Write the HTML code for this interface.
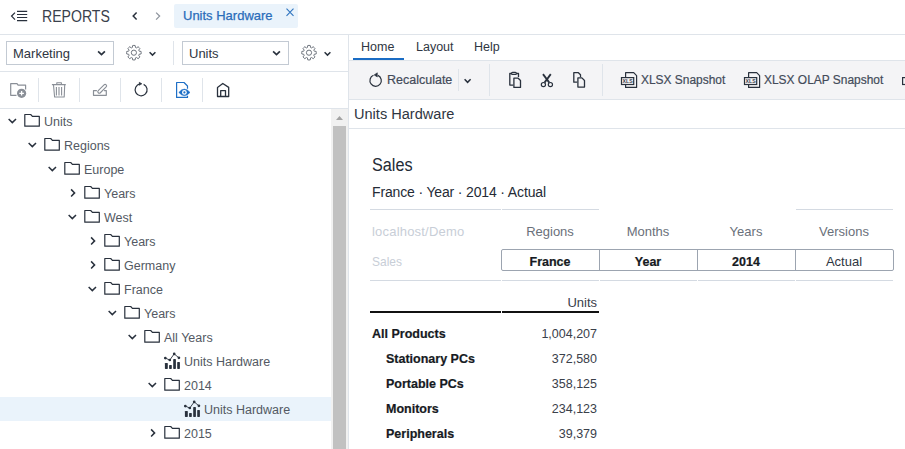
<!DOCTYPE html>
<html><head><meta charset="utf-8"><style>
html,body{margin:0;padding:0;background:#fff;}
#root{position:relative;width:905px;height:449px;overflow:hidden;background:#fff;font-family:"Liberation Sans",sans-serif;}
.t{position:absolute;white-space:nowrap;line-height:1;}
.r{position:absolute;}
#ic{position:absolute;left:0;top:0;}
</style></head><body><div id="root">
<div class="t" style="left:42px;top:9px;font-size:16px;color:#3a414c;transform:scaleX(0.88);transform-origin:left top;">REPORTS</div>
<div class="r" style="left:174px;top:4px;width:124px;height:24px;background:#eaf3fb;border-radius:2px;"></div>
<div class="t" style="left:183px;top:9px;font-size:13px;color:#2a6dba;-webkit-text-stroke:0.25px #2a6dba;">Units Hardware</div>
<div class="r" style="left:0px;top:34px;width:905px;height:1px;background:#dfe4ea;"></div>
<div class="r" style="left:348px;top:35px;width:1px;height:414px;background:#dfe4ea;"></div>
<div class="r" style="left:6px;top:41px;width:108px;height:24px;background:#fff;border:1px solid #c3cad3;box-sizing:border-box;"></div>
<div class="t" style="left:13px;top:47px;font-size:13px;color:#2f3642;">Marketing</div>
<div class="r" style="left:173px;top:41px;width:1px;height:24px;background:#dfe4ea;"></div>
<div class="r" style="left:182px;top:41px;width:107px;height:24px;background:#fff;border:1px solid #c3cad3;box-sizing:border-box;"></div>
<div class="t" style="left:189px;top:47px;font-size:13px;color:#2f3642;">Units</div>
<div class="r" style="left:0px;top:71px;width:348px;height:1px;background:#dfe4ea;"></div>
<div class="r" style="left:38px;top:78px;width:1px;height:24px;background:#dfe4ea;"></div>
<div class="r" style="left:79px;top:78px;width:1px;height:24px;background:#dfe4ea;"></div>
<div class="r" style="left:120px;top:78px;width:1px;height:24px;background:#dfe4ea;"></div>
<div class="r" style="left:161px;top:78px;width:1px;height:24px;background:#dfe4ea;"></div>
<div class="r" style="left:202px;top:78px;width:1px;height:24px;background:#dfe4ea;"></div>
<div class="r" style="left:0px;top:108px;width:348px;height:1px;background:#dfe4ea;"></div>
<div class="r" style="left:0px;top:397px;width:331px;height:24px;background:#eaf3fb;"></div>
<div class="t" style="left:44px;top:116px;font-size:12.5px;color:#535963;">Units</div>
<div class="t" style="left:64px;top:140px;font-size:12.5px;color:#535963;">Regions</div>
<div class="t" style="left:84px;top:164px;font-size:12.5px;color:#535963;">Europe</div>
<div class="t" style="left:104px;top:188px;font-size:12.5px;color:#535963;">Years</div>
<div class="t" style="left:104px;top:212px;font-size:12.5px;color:#535963;">West</div>
<div class="t" style="left:124px;top:236px;font-size:12.5px;color:#535963;">Years</div>
<div class="t" style="left:124px;top:260px;font-size:12.5px;color:#535963;">Germany</div>
<div class="t" style="left:124px;top:284px;font-size:12.5px;color:#535963;">France</div>
<div class="t" style="left:144px;top:308px;font-size:12.5px;color:#535963;">Years</div>
<div class="t" style="left:164px;top:332px;font-size:12.5px;color:#535963;">All Years</div>
<div class="t" style="left:184px;top:356px;font-size:12.5px;color:#535963;">Units Hardware</div>
<div class="t" style="left:184px;top:380px;font-size:12.5px;color:#535963;">2014</div>
<div class="t" style="left:204px;top:404px;font-size:12.5px;color:#535963;">Units Hardware</div>
<div class="t" style="left:184px;top:428px;font-size:12.5px;color:#535963;">2015</div>
<div class="r" style="left:331px;top:109px;width:17px;height:340px;background:#f1f1f1;"></div>
<div class="r" style="left:333px;top:126px;width:13px;height:323px;background:#c1c1c1;"></div>
<div class="t" style="left:361px;top:41px;font-size:12.5px;color:#2f3642;">Home</div>
<div class="t" style="left:416px;top:41px;font-size:12.5px;color:#2f3642;">Layout</div>
<div class="t" style="left:474px;top:41px;font-size:12.5px;color:#2f3642;">Help</div>
<div class="r" style="left:353px;top:58px;width:51px;height:2px;background:#1a6cc4;"></div>
<div class="r" style="left:349px;top:60px;width:556px;height:1px;background:#dfe4ea;"></div>
<div class="r" style="left:349px;top:61px;width:556px;height:38px;background:#f4f4f6;"></div>
<div class="r" style="left:349px;top:99px;width:556px;height:1px;background:#dfe4ea;"></div>
<div class="t" style="left:387px;top:74px;font-size:12.5px;color:#434b59;-webkit-text-stroke:0.2px #434b59;">Recalculate</div>
<div class="r" style="left:458px;top:69px;width:1px;height:22px;background:#dfe4ea;"></div>
<div class="r" style="left:489px;top:64px;width:1px;height:32px;background:#dfe4ea;"></div>
<div class="r" style="left:602px;top:64px;width:1px;height:32px;background:#dfe4ea;"></div>
<div class="t" style="left:641px;top:74px;font-size:12.5px;color:#434b59;transform:scaleX(0.955);transform-origin:left top;-webkit-text-stroke:0.2px #434b59;">XLSX Snapshot</div>
<div class="t" style="left:764px;top:74px;font-size:12.5px;color:#434b59;transform:scaleX(0.955);transform-origin:left top;-webkit-text-stroke:0.2px #434b59;">XLSX OLAP Snapshot</div>
<div class="t" style="left:354px;top:107px;font-size:14px;color:#2f3642;transform:scaleX(1.04);transform-origin:left top;">Units Hardware</div>
<div class="r" style="left:349px;top:128px;width:556px;height:1px;background:#dfe4ea;"></div>
<div class="t" style="left:372px;top:156px;font-size:18px;color:#252b36;transform:scaleX(0.9);transform-origin:left top;">Sales</div>
<div class="t" style="left:372px;top:185px;font-size:14px;color:#252b36;letter-spacing:-0.15px;">France · Year · 2014 · Actual</div>
<div class="r" style="left:370px;top:209px;width:131px;height:1px;background:#d4dae2;"></div>
<div class="r" style="left:502px;top:209px;width:97px;height:1px;background:#d4dae2;"></div>
<div class="r" style="left:796px;top:209px;width:97px;height:1px;background:#d4dae2;"></div>
<div class="t" style="left:372px;top:225px;font-size:13px;color:#c8ced7;letter-spacing:0.2px;">localhost/Demo</div>
<div class="t" style="left:372px;top:255px;font-size:13px;color:#c8ced7;transform:scaleX(0.92);transform-origin:left top;">Sales</div>
<div class="t" style="left:501.0px;width:98px;text-align:center;top:225px;font-size:13px;color:#6a707a;">Regions</div>
<div class="t" style="left:599.0px;width:98px;text-align:center;top:225px;font-size:13px;color:#6a707a;">Months</div>
<div class="t" style="left:697.0px;width:98px;text-align:center;top:225px;font-size:13px;color:#6a707a;">Years</div>
<div class="t" style="left:795.0px;width:98px;text-align:center;top:225px;font-size:13px;color:#6a707a;">Versions</div>
<div class="r" style="left:501px;top:249px;width:393px;height:22px;background:#fff;border:1px solid #9ca4b0;box-sizing:border-box;border-radius:2px;"></div>
<div class="r" style="left:599px;top:249px;width:1px;height:22px;background:#9ca4b0;"></div>
<div class="r" style="left:697px;top:249px;width:1px;height:22px;background:#9ca4b0;"></div>
<div class="r" style="left:795px;top:249px;width:1px;height:22px;background:#9ca4b0;"></div>
<div class="t" style="left:501.0px;width:98px;text-align:center;top:256px;font-size:12.5px;color:#161a22;font-weight:700;-webkit-text-stroke:0.2px #161a22;">France</div>
<div class="t" style="left:599.0px;width:98px;text-align:center;top:256px;font-size:12.5px;color:#161a22;font-weight:700;-webkit-text-stroke:0.2px #161a22;">Year</div>
<div class="t" style="left:697.0px;width:98px;text-align:center;top:256px;font-size:12.5px;color:#161a22;font-weight:700;-webkit-text-stroke:0.2px #161a22;">2014</div>
<div class="t" style="left:795.0px;width:98px;text-align:center;top:255px;font-size:13px;color:#2f3642;">Actual</div>
<div class="r" style="left:370px;top:280px;width:131px;height:1px;background:#d4dae2;"></div>
<div class="r" style="left:502px;top:280px;width:97px;height:1px;background:#d4dae2;"></div>
<div class="r" style="left:600px;top:280px;width:97px;height:1px;background:#d4dae2;"></div>
<div class="r" style="left:698px;top:280px;width:97px;height:1px;background:#d4dae2;"></div>
<div class="r" style="left:796px;top:280px;width:97px;height:1px;background:#d4dae2;"></div>
<div class="t" style="right:308px;top:296px;font-size:13px;color:#3a404a;">Units</div>
<div class="r" style="left:370px;top:311px;width:131px;height:2px;background:#111;"></div>
<div class="r" style="left:502px;top:311px;width:97px;height:2px;background:#111;"></div>
<div class="t" style="left:372px;top:328px;font-size:12.5px;color:#161a22;font-weight:700;-webkit-text-stroke:0.2px #161a22;">All Products</div>
<div class="t" style="right:308px;top:328px;font-size:12.5px;color:#3a404a;">1,004,207</div>
<div class="t" style="left:386px;top:353px;font-size:12.5px;color:#161a22;font-weight:700;-webkit-text-stroke:0.2px #161a22;">Stationary PCs</div>
<div class="t" style="right:308px;top:353px;font-size:12.5px;color:#3a404a;">372,580</div>
<div class="t" style="left:386px;top:378px;font-size:12.5px;color:#161a22;font-weight:700;-webkit-text-stroke:0.2px #161a22;">Portable PCs</div>
<div class="t" style="right:308px;top:378px;font-size:12.5px;color:#3a404a;">358,125</div>
<div class="t" style="left:386px;top:403px;font-size:12.5px;color:#161a22;font-weight:700;-webkit-text-stroke:0.2px #161a22;">Monitors</div>
<div class="t" style="right:308px;top:403px;font-size:12.5px;color:#3a404a;">234,123</div>
<div class="t" style="left:386px;top:428px;font-size:12.5px;color:#161a22;font-weight:700;-webkit-text-stroke:0.2px #161a22;">Peripherals</div>
<div class="t" style="right:308px;top:428px;font-size:12.5px;color:#3a404a;">39,379</div>
<svg id="ic" width="905" height="449" viewBox="0 0 905 449">
<path d="M15.00 12.60 L11.60 16.10 L15.00 19.60" fill="none" stroke="#29313d" stroke-width="1.3" stroke-linecap="butt" stroke-linejoin="miter"/>
<path d="M17 11.4H27.2M17 14.5H27.2M17 17.5H27.2M17 20.6H27.2" fill="none" stroke="#29313d" stroke-width="1.1" stroke-linejoin="round" />
<path d="M136.60 12.60 L133.20 16.10 L136.60 19.60" fill="none" stroke="#29313d" stroke-width="1.5" stroke-linecap="butt" stroke-linejoin="miter"/>
<path d="M156.10 12.60 L159.60 16.10 L156.10 19.60" fill="none" stroke="#8f959e" stroke-width="1.3" stroke-linecap="butt" stroke-linejoin="miter"/>
<path d="M286.5 8.7L293.5 15.9M293.5 8.7L286.5 15.9" fill="none" stroke="#2f74bf" stroke-width="1.1" stroke-linejoin="round" />
<path d="M98.10 51.30 L101.50 54.60 L104.90 51.30" fill="none" stroke="#29313d" stroke-width="1.7" stroke-linecap="butt" stroke-linejoin="miter"/>
<path d="M132.30 47.54 L132.66 45.51 A7.3 7.3 0 0 1 135.14 45.51 L135.50 47.54 A5.4 5.4 0 0 1 136.42 47.92 L136.42 47.92 L138.11 46.74 A7.3 7.3 0 0 1 139.86 48.49 L138.68 50.18 A5.4 5.4 0 0 1 139.06 51.10 L139.06 51.10 L141.09 51.46 A7.3 7.3 0 0 1 141.09 53.94 L139.06 54.30 A5.4 5.4 0 0 1 138.68 55.22 L138.68 55.22 L139.86 56.91 A7.3 7.3 0 0 1 138.11 58.66 L136.42 57.48 A5.4 5.4 0 0 1 135.50 57.86 L135.50 57.86 L135.14 59.89 A7.3 7.3 0 0 1 132.66 59.89 L132.30 57.86 A5.4 5.4 0 0 1 131.38 57.48 L131.38 57.48 L129.69 58.66 A7.3 7.3 0 0 1 127.94 56.91 L129.12 55.22 A5.4 5.4 0 0 1 128.74 54.30 L128.74 54.30 L126.71 53.94 A7.3 7.3 0 0 1 126.71 51.46 L128.74 51.10 A5.4 5.4 0 0 1 129.12 50.18 L129.12 50.18 L127.94 48.49 A7.3 7.3 0 0 1 129.69 46.74 L131.38 47.92 A5.4 5.4 0 0 1 132.30 47.54 Z" fill="none" stroke="#6f757e" stroke-width="1.0" stroke-linejoin="round" />
<circle cx="133.9" cy="52.7" r="2.6" fill="none" stroke="#6f757e" stroke-width="1.0"/>
<path d="M149.60 52.30 L152.50 55.10 L155.40 52.30" fill="none" stroke="#29313d" stroke-width="1.5" stroke-linecap="butt" stroke-linejoin="miter"/>
<path d="M273.10 51.30 L276.50 54.60 L279.90 51.30" fill="none" stroke="#29313d" stroke-width="1.7" stroke-linecap="butt" stroke-linejoin="miter"/>
<path d="M307.40 47.54 L307.76 45.51 A7.3 7.3 0 0 1 310.24 45.51 L310.60 47.54 A5.4 5.4 0 0 1 311.52 47.92 L311.52 47.92 L313.21 46.74 A7.3 7.3 0 0 1 314.96 48.49 L313.78 50.18 A5.4 5.4 0 0 1 314.16 51.10 L314.16 51.10 L316.19 51.46 A7.3 7.3 0 0 1 316.19 53.94 L314.16 54.30 A5.4 5.4 0 0 1 313.78 55.22 L313.78 55.22 L314.96 56.91 A7.3 7.3 0 0 1 313.21 58.66 L311.52 57.48 A5.4 5.4 0 0 1 310.60 57.86 L310.60 57.86 L310.24 59.89 A7.3 7.3 0 0 1 307.76 59.89 L307.40 57.86 A5.4 5.4 0 0 1 306.48 57.48 L306.48 57.48 L304.79 58.66 A7.3 7.3 0 0 1 303.04 56.91 L304.22 55.22 A5.4 5.4 0 0 1 303.84 54.30 L303.84 54.30 L301.81 53.94 A7.3 7.3 0 0 1 301.81 51.46 L303.84 51.10 A5.4 5.4 0 0 1 304.22 50.18 L304.22 50.18 L303.04 48.49 A7.3 7.3 0 0 1 304.79 46.74 L306.48 47.92 A5.4 5.4 0 0 1 307.40 47.54 Z" fill="none" stroke="#6f757e" stroke-width="1.0" stroke-linejoin="round" />
<circle cx="309" cy="52.7" r="2.6" fill="none" stroke="#6f757e" stroke-width="1.0"/>
<path d="M324.60 52.30 L327.50 55.10 L330.40 52.30" fill="none" stroke="#29313d" stroke-width="1.5" stroke-linecap="butt" stroke-linejoin="miter"/>
<path d="M16.5 95.3 H10.7 V83.7 H17 L18.1 85.2 H25.6 V89.5" fill="none" stroke="#8a8f97" stroke-width="1.2" stroke-linejoin="round" />
<circle cx="21.6" cy="93.3" r="4.6" fill="#8a8f97"/>
<path d="M21.6 91V95.6M19.3 93.3H23.9" fill="none" stroke="#fff" stroke-width="1.3" stroke-linejoin="round" />
<path d="M51.9 84.6 H65.8 M56.8 84.6 V82.7 H61.4 V84.6 M53.5 85 L54.6 97 H64.2 L64.7 85 M56.4 87 V95.5 M59 87 V95.5 M61.6 87 V95.5" fill="none" stroke="#8a8f97" stroke-width="1.1" stroke-linejoin="round" />
<path d="M96.9 90.6 H93.5 V95.3 H106.3 V90.6 H104.1" fill="none" stroke="#8a8f97" stroke-width="1.2" stroke-linejoin="round" />
<rect x="-5.6" y="-1.5" width="11.2" height="3" rx="1.5" transform="translate(102.2 88.8) rotate(-45)" fill="#fff" stroke="#8a8f97" stroke-width="1.1"/>
<path d="M143.64 84.36 A6 6 0 1 1 140.06 83.89" fill="none" stroke="#29313d" stroke-width="1.2" stroke-linejoin="round" />
<path d="M139.3 82.3 L141.9 83.8 L139.3 85.3 Z" fill="#29313d" stroke="#29313d" stroke-width="0.6" stroke-linejoin="round" />
<path d="M187.5 95.8 V97.4 H176.6 V82.5 H184 L187.5 86 V88.7" fill="none" stroke="#1e6fc6" stroke-width="1.2" stroke-linejoin="round" />
<path d="M178.8 92.4 Q184.4 85.8 190 92.4 Q184.4 99 178.8 92.4 Z" fill="#1e6fc6" stroke="#1e6fc6" stroke-width="0.5" stroke-linejoin="round" />
<circle cx="184.4" cy="92.4" r="2.4" fill="#fff"/><circle cx="184.4" cy="92.4" r="1.1" fill="#1e6fc6"/>
<path d="M217.5 96.5 V87.4 L222.8 83.5 L228.7 87.4 V96.5 Z M220.7 96.5 V90.6 H225.5 V96.5" fill="none" stroke="#29313d" stroke-width="1.3" stroke-linejoin="round" />
<path d="M8.65 119.06 L12.33 122.60 L16.00 119.06" fill="none" stroke="#29313d" stroke-width="1.5" stroke-linecap="butt" stroke-linejoin="miter"/>
<path d="M24.8 114.5 H30.7 L32.4 116.3 H39.3 V126.2 H24.8 Z" fill="none" stroke="#29313d" stroke-width="1.2" stroke-linejoin="round" />
<path d="M28.65 143.06 L32.33 146.60 L36.00 143.06" fill="none" stroke="#29313d" stroke-width="1.5" stroke-linecap="butt" stroke-linejoin="miter"/>
<path d="M44.8 138.5 H50.7 L52.4 140.3 H59.3 V150.2 H44.8 Z" fill="none" stroke="#29313d" stroke-width="1.2" stroke-linejoin="round" />
<path d="M48.65 167.06 L52.33 170.60 L56.00 167.06" fill="none" stroke="#29313d" stroke-width="1.5" stroke-linecap="butt" stroke-linejoin="miter"/>
<path d="M64.8 162.5 H70.7 L72.4 164.3 H79.3 V174.2 H64.8 Z" fill="none" stroke="#29313d" stroke-width="1.2" stroke-linejoin="round" />
<path d="M71.10 189.35 L74.60 192.90 L71.10 196.45" fill="none" stroke="#29313d" stroke-width="1.5" stroke-linecap="butt" stroke-linejoin="miter"/>
<path d="M84.8 186.5 H90.7 L92.4 188.3 H99.3 V198.2 H84.8 Z" fill="none" stroke="#29313d" stroke-width="1.2" stroke-linejoin="round" />
<path d="M68.65 215.06 L72.33 218.60 L76.00 215.06" fill="none" stroke="#29313d" stroke-width="1.5" stroke-linecap="butt" stroke-linejoin="miter"/>
<path d="M84.8 210.5 H90.7 L92.4 212.3 H99.3 V222.2 H84.8 Z" fill="none" stroke="#29313d" stroke-width="1.2" stroke-linejoin="round" />
<path d="M91.10 237.35 L94.60 240.90 L91.10 244.45" fill="none" stroke="#29313d" stroke-width="1.5" stroke-linecap="butt" stroke-linejoin="miter"/>
<path d="M104.8 234.5 H110.7 L112.4 236.3 H119.3 V246.2 H104.8 Z" fill="none" stroke="#29313d" stroke-width="1.2" stroke-linejoin="round" />
<path d="M91.10 261.35 L94.60 264.90 L91.10 268.45" fill="none" stroke="#29313d" stroke-width="1.5" stroke-linecap="butt" stroke-linejoin="miter"/>
<path d="M104.8 258.5 H110.7 L112.4 260.3 H119.3 V270.2 H104.8 Z" fill="none" stroke="#29313d" stroke-width="1.2" stroke-linejoin="round" />
<path d="M88.65 287.06 L92.33 290.60 L96.00 287.06" fill="none" stroke="#29313d" stroke-width="1.5" stroke-linecap="butt" stroke-linejoin="miter"/>
<path d="M104.8 282.5 H110.7 L112.4 284.3 H119.3 V294.2 H104.8 Z" fill="none" stroke="#29313d" stroke-width="1.2" stroke-linejoin="round" />
<path d="M108.65 311.06 L112.33 314.60 L116.00 311.06" fill="none" stroke="#29313d" stroke-width="1.5" stroke-linecap="butt" stroke-linejoin="miter"/>
<path d="M124.8 306.5 H130.7 L132.4 308.3 H139.3 V318.2 H124.8 Z" fill="none" stroke="#29313d" stroke-width="1.2" stroke-linejoin="round" />
<path d="M128.65 335.06 L132.33 338.60 L136.00 335.06" fill="none" stroke="#29313d" stroke-width="1.5" stroke-linecap="butt" stroke-linejoin="miter"/>
<path d="M144.8 330.5 H150.7 L152.4 332.3 H159.3 V342.2 H144.8 Z" fill="none" stroke="#29313d" stroke-width="1.2" stroke-linejoin="round" />
<rect x="164.90" y="363.00" width="2.90" height="5.90" rx="0.6" fill="#29313d"/>
<rect x="169.10" y="365.00" width="2.70" height="3.90" rx="0.6" fill="#29313d"/>
<rect x="173.20" y="359.10" width="2.70" height="9.80" rx="0.6" fill="#29313d"/>
<rect x="177.20" y="362.00" width="2.70" height="6.90" rx="0.6" fill="#29313d"/>
<path d="M165.30 358.10 L169.80 360.00 L174.20 353.90 L178.90 357.80" fill="none" stroke="#29313d" stroke-width="0.9" stroke-linecap="butt" stroke-linejoin="miter"/>
<circle cx="165.30" cy="358.10" r="1.35" fill="#29313d"/>
<circle cx="169.80" cy="360.00" r="1.35" fill="#29313d"/>
<circle cx="174.20" cy="353.90" r="1.35" fill="#29313d"/>
<circle cx="178.90" cy="357.80" r="1.35" fill="#29313d"/>
<path d="M148.65 383.06 L152.33 386.60 L156.00 383.06" fill="none" stroke="#29313d" stroke-width="1.5" stroke-linecap="butt" stroke-linejoin="miter"/>
<path d="M164.8 378.5 H170.7 L172.4 380.3 H179.3 V390.2 H164.8 Z" fill="none" stroke="#29313d" stroke-width="1.2" stroke-linejoin="round" />
<rect x="184.90" y="411.00" width="2.90" height="5.90" rx="0.6" fill="#29313d"/>
<rect x="189.10" y="413.00" width="2.70" height="3.90" rx="0.6" fill="#29313d"/>
<rect x="193.20" y="407.10" width="2.70" height="9.80" rx="0.6" fill="#29313d"/>
<rect x="197.20" y="410.00" width="2.70" height="6.90" rx="0.6" fill="#29313d"/>
<path d="M185.30 406.10 L189.80 408.00 L194.20 401.90 L198.90 405.80" fill="none" stroke="#29313d" stroke-width="0.9" stroke-linecap="butt" stroke-linejoin="miter"/>
<circle cx="185.30" cy="406.10" r="1.35" fill="#29313d"/>
<circle cx="189.80" cy="408.00" r="1.35" fill="#29313d"/>
<circle cx="194.20" cy="401.90" r="1.35" fill="#29313d"/>
<circle cx="198.90" cy="405.80" r="1.35" fill="#29313d"/>
<path d="M151.10 429.35 L154.60 432.90 L151.10 436.45" fill="none" stroke="#29313d" stroke-width="1.5" stroke-linecap="butt" stroke-linejoin="miter"/>
<path d="M164.8 426.5 H170.7 L172.4 428.3 H179.3 V438.2 H164.8 Z" fill="none" stroke="#29313d" stroke-width="1.2" stroke-linejoin="round" />
<path d="M336 120 L339.5 116 L343 120Z" fill="#a3a3a3"/>
<path d="M378 75.4 A5.7 5.7 0 1 1 373.5 75.3" fill="none" stroke="#29313d" stroke-width="1.2" stroke-linejoin="round" />
<path d="M377.3 72.8 L374.2 74.9 L377.3 77 Z" fill="#29313d" stroke="#29313d" stroke-width="0.6" stroke-linejoin="round" />
<path d="M464.60 79.20 L467.60 82.30 L470.60 79.20" fill="none" stroke="#29313d" stroke-width="1.5" stroke-linecap="butt" stroke-linejoin="miter"/>
<path d="M513.3 85.1 H509.8 V73.5 H518.5 V77" fill="none" stroke="#29313d" stroke-width="1.3" stroke-linejoin="round" />
<rect x="511.5" y="72.4" width="4.9" height="2" rx="1" fill="#f4f4f6" stroke="#29313d" stroke-width="1.1"/>
<path d="M513.9 87.4 V78.2 H518.2 L520.5 80.5 V87.4 Z" fill="none" stroke="#29313d" stroke-width="1.3" stroke-linejoin="round" />
<path d="M543.00 74.10 L549.30 82.60" fill="none" stroke="#29313d" stroke-width="1.8" stroke-linecap="butt" stroke-linejoin="miter"/>
<path d="M550.80 74.10 L544.50 82.60" fill="none" stroke="#29313d" stroke-width="1.8" stroke-linecap="butt" stroke-linejoin="miter"/>
<circle cx="543.4" cy="84.6" r="2.1" fill="#f4f4f6" stroke="#29313d" stroke-width="1.2"/><circle cx="550.4" cy="84.6" r="2.1" fill="#f4f4f6" stroke="#29313d" stroke-width="1.2"/>
<path d="M577.3 82.2 H573.8 V72.7 H578.4 L580.5 74.8 V77" fill="none" stroke="#29313d" stroke-width="1.3" stroke-linejoin="round" />
<path d="M577.9 87.1 V77.9 H581.9 L584.5 80.5 V87.1 Z" fill="none" stroke="#29313d" stroke-width="1.3" stroke-linejoin="round" />
<path d="M625.6 77 V72.7 H633.7 L636.6 75.6 V87.4 H625.6 V84.5" fill="none" stroke="#29313d" stroke-width="1.2" stroke-linejoin="round" />
<rect x="621.5" y="77.6" width="12.2" height="6.9" fill="#f4f4f6" stroke="#29313d" stroke-width="1.2"/>
<text x="627.6" y="83.2" font-size="5.2" font-family="Liberation Sans" font-weight="700" text-anchor="middle" fill="#3b424d">XLS</text>
<path d="M748.6 77 V72.7 H756.7 L759.6 75.6 V87.4 H748.6 V84.5" fill="none" stroke="#29313d" stroke-width="1.2" stroke-linejoin="round" />
<rect x="744.5" y="77.6" width="12.2" height="6.9" fill="#f4f4f6" stroke="#29313d" stroke-width="1.2"/>
<text x="750.6" y="83.2" font-size="5.2" font-family="Liberation Sans" font-weight="700" text-anchor="middle" fill="#3b424d">XLS</text>
<rect x="902.6" y="77.6" width="8" height="6.9" fill="#f4f4f6" stroke="#29313d" stroke-width="1.2"/>
</svg>
</div></body></html>
